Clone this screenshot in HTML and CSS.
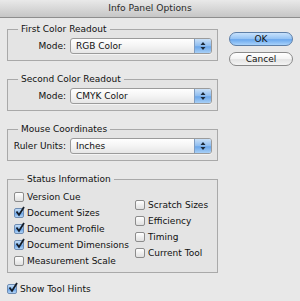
FILE: index.html
```html
<!DOCTYPE html>
<html>
<head>
<meta charset="utf-8">
<link rel="stylesheet" href="styles.css">
</head>
<body>
<div class="window">
  <div class="titlebar">Info Panel Options</div>
  <div class="content">
    <div class="main">
      <fieldset class="group">
        <legend>First Color Readout</legend>
        <div class="field">
          <span class="label">Mode:</span>
          <div class="select"><span class="value">RGB Color</span><span class="arrows"><svg width="16" height="14" viewBox="0 0 16 14"><path d="M5.5 6 L8 3 L10.5 6 Z M5.5 8 L8 11 L10.5 8 Z" fill="#1c2a3a"/></svg></span></div>
        </div>
      </fieldset>
      <fieldset class="group">
        <legend>Second Color Readout</legend>
        <div class="field">
          <span class="label">Mode:</span>
          <div class="select"><span class="value">CMYK Color</span><span class="arrows"><svg width="16" height="14" viewBox="0 0 16 14"><path d="M5.5 6 L8 3 L10.5 6 Z M5.5 8 L8 11 L10.5 8 Z" fill="#1c2a3a"/></svg></span></div>
        </div>
      </fieldset>
      <fieldset class="group">
        <legend>Mouse Coordinates</legend>
        <div class="field">
          <span class="label">Ruler Units:</span>
          <div class="select"><span class="value">Inches</span><span class="arrows"><svg width="16" height="14" viewBox="0 0 16 14"><path d="M5.5 6 L8 3 L10.5 6 Z M5.5 8 L8 11 L10.5 8 Z" fill="#1c2a3a"/></svg></span></div>
        </div>
      </fieldset>
      <fieldset class="group status">
        <legend>Status Information</legend>
        <div class="checks">
          <div class="col">
            <div class="check"><span class="box"></span>Version Cue</div>
            <div class="check"><span class="box on"><svg width="12" height="12" viewBox="0 0 12 12"><path d="M2.5 5.5 L5 9 L10 1" fill="none" stroke="#141c28" stroke-width="1.8"/></svg></span>Document Sizes</div>
            <div class="check"><span class="box on"><svg width="12" height="12" viewBox="0 0 12 12"><path d="M2.5 5.5 L5 9 L10 1" fill="none" stroke="#141c28" stroke-width="1.8"/></svg></span>Document Profile</div>
            <div class="check"><span class="box on"><svg width="12" height="12" viewBox="0 0 12 12"><path d="M2.5 5.5 L5 9 L10 1" fill="none" stroke="#141c28" stroke-width="1.8"/></svg></span>Document Dimensions</div>
            <div class="check"><span class="box"></span>Measurement Scale</div>
          </div>
          <div class="col">
            <div class="check"><span class="box"></span>Scratch Sizes</div>
            <div class="check"><span class="box"></span>Efficiency</div>
            <div class="check"><span class="box"></span>Timing</div>
            <div class="check"><span class="box"></span>Current Tool</div>
          </div>
        </div>
      </fieldset>
      <div class="check hints"><span class="box on"><svg width="12" height="12" viewBox="0 0 12 12"><path d="M2.5 5.5 L5 9 L10 1" fill="none" stroke="#141c28" stroke-width="1.8"/></svg></span>Show Tool Hints</div>
    </div>
    <div class="buttons">
      <button class="btn ok">OK</button>
      <button class="btn">Cancel</button>
    </div>
  </div>
</div>
</body>
</html>
```
FILE: styles.css
```css
html, body {
  margin: 0;
  padding: 0;
}
body {
  background: #e8e8e8;
  font-family: "DejaVu Sans", "Liberation Sans", sans-serif;
  font-size: 9px;
  color: #111;
}
.window {
  width: 300px;
  height: 301px;
  background: #e8e8e8;
}
.titlebar {
  height: 17px;
  line-height: 16px;
  text-align: center;
  color: #2a2a2a;
  font-size: 9.2px;
  background: linear-gradient(#e9e9e9, #d4d4d4 60%, #c6c6c6);
  border-bottom: 1px solid #8e8e8e;
}
.content {
  display: flex;
  padding: 5px 7px 0 7px;
  gap: 11px;
}
.main {
  width: 211px;
  display: flex;
  flex-direction: column;
  gap: 12px;
}
.group {
  margin: 0;
  padding: 3px 0 6px 0;
  border: 1px solid #a9a9a9;
  background: #e4e4e4;
  min-width: 0;
}
.group legend {
  margin-left: 10px;
  padding: 0 3px;
  line-height: 12px;
  font-size: 9px;
  color: #111;
}
.field {
  display: flex;
  align-items: center;
  gap: 4px;
}
.field .label {
  width: 58px;
  text-align: right;
  flex: none;
}
.select {
  width: 142px;
  height: 16px;
  box-sizing: border-box;
  border: 1px solid #9b9b9b;
  border-radius: 3px;
  background: linear-gradient(#ffffff, #f4f4f4 50%, #e6e6e6);
  display: flex;
  align-items: center;
  overflow: hidden;
  box-shadow: 0 1px 0 rgba(255,255,255,0.6);
}
.select .value {
  flex: 1;
  padding-left: 5px;
  line-height: 14px;
}
.select .arrows {
  width: 16px;
  height: 14px;
  flex: none;
  border-left: 1px solid #7f9cc0;
  background: linear-gradient(#c9e0f7, #8dbcf0 50%, #6aa6ea 55%, #a9d0f6);
  display: flex;
}
.status {
  padding: 4px 0 3px 6px;
}
.checks {
  display: flex;
  align-items: center;
}
.col {
  display: flex;
  flex-direction: column;
}
.col + .col {
  margin-left: 6px;
}
.check {
  display: flex;
  align-items: center;
  height: 16px;
  gap: 3px;
  white-space: nowrap;
}
.box {
  width: 10px;
  height: 10px;
  box-sizing: border-box;
  border: 1px solid #8c8c8c;
  border-radius: 2px;
  background: linear-gradient(#ffffff, #efefef 50%, #e0e0e0);
  position: relative;
  flex: none;
}
.box.on {
  border-color: #6f8db3;
  background: linear-gradient(#c4ddf7, #86b8ee 50%, #6aa5ea 55%, #b2d4f6);
}
.box svg {
  position: absolute;
  left: -1px;
  top: -3px;
}
.hints {
  margin-top: -4px;
  height: 16px;
}
.buttons {
  display: flex;
  flex-direction: column;
  gap: 6px;
  padding-top: 9px;
  width: 64px;
}
.btn {
  height: 14px;
  width: 64px;
  padding: 0;
  margin: 0;
  border: 1px solid #8a8a8a;
  border-radius: 7px;
  font-family: "DejaVu Sans", "Liberation Sans", sans-serif;
  font-size: 9px;
  line-height: 12px;
  color: #111;
  background: linear-gradient(#ffffff, #f3f3f3 50%, #e4e4e4 55%, #f4f4f4);
}
.btn.ok {
  border-color: #5d7fa8;
  background: linear-gradient(#c8e2fc, #93c2f4 50%, #6aa8ee 55%, #a8d2fa);
}
```
